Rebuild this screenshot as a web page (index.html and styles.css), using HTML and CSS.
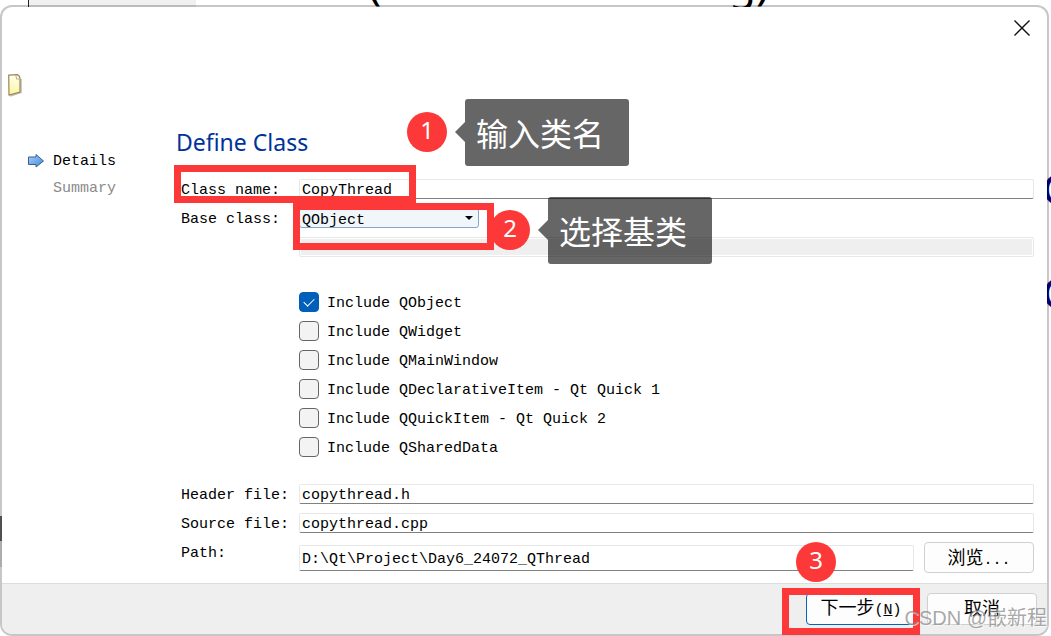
FILE: index.html
```html
<!DOCTYPE html>
<html lang="zh-CN">

<head>
    <meta charset="UTF-8">
    <meta name="viewport" content="width=device-width, initial-scale=1.0">
    <title>C++ Class</title>
    <link rel="stylesheet" href="styles.css">
</head>

<body>
    <!-- editor window behind the dialog -->
    <div class="backdrop" aria-hidden="true">
        <div class="backdrop-tab"></div>
        <span class="backdrop-text paren">(</span>
        <span class="backdrop-text tail">g)</span>
        <span class="backdrop-text code code-first">C</span>
        <span class="backdrop-text code code-second">C</span>
        <div class="backdrop-scroll"></div>
    </div>

    <main class="dialog">
        <div class="titlebar">
            <button class="close" type="button" aria-label="Close">
                <svg width="16" height="16" viewBox="0 0 16 16">
                    <path d="M.5 .5L15.500 15.500M15.500 .5L.5 15.500" fill="none" stroke="#111" stroke-width="1.400" />
                </svg>
            </button>
        </div>

        <div class="banner">
            <svg width="15" height="24" viewBox="0 0 15 24">
                <defs>
                    <linearGradient id="paper" x1="0" y1="0" x2="0" y2="1">
                        <stop offset="0" stop-color="#fffef0" />
                        <stop offset="1" stop-color="#fbf6a0" />
                    </linearGradient>
                </defs>
                <path d="M2 22L13 18.500V5" fill="none" stroke="#bbb" stroke-width="1.500" />
                <path d="M.7 1.200L9 .7Q12 1.500 12 5V18L1 21Z" fill="url(#paper)" stroke="#9c8455" stroke-width="1.200" />
                <path d="M8 1.300L8.500 5H11.500" fill="#fff" stroke="#b5ab8c" />
            </svg>
        </div>

        <div class="content">
            <nav class="steps">
                <div class="step active">
                    <svg width="17" height="16" viewBox="0 0 17 16">
                        <defs>
                            <linearGradient id="arrow" x1="0" y1="0" x2="1" y2="1">
                                <stop offset="0" stop-color="#a9d2fb" />
                                <stop offset="1" stop-color="#4186d8" />
                            </linearGradient>
                        </defs>
                        <path d="M.5 4H8V1.500L15.500 8L8 14V11.500H.5Z" fill="url(#arrow)" stroke="#365f94" />
                    </svg>
                    <span>Details</span>
                </div>
                <div class="step">
                    <span>Summary</span>
                </div>
            </nav>

            <form class="form">
                <h1>Define Class</h1>

                <div class="row">
                    <label for="class-name">Class name:</label>
                    <input class="field" id="class-name" type="text" value="CopyThread">
                    <div class="mark mark-name"></div>
                    <div class="badge badge-name">1</div>
                    <div class="callout callout-name">输入类名</div>
                </div>
                <div class="row">
                    <label for="base-class">Base class:</label>
                    <div class="combo">
                        <select id="base-class">
                            <option>QObject</option>
                        </select>
                    </div>
                    <div class="mark mark-base"></div>
                    <div class="badge badge-base">2</div>
                    <div class="callout callout-base">选择基类</div>
                </div>
                <div class="row">
                    <span></span>
                    <input class="field" type="text" aria-label="Custom base class" disabled>
                </div>

                <div class="checks">
                    <label><input type="checkbox" checked><span>Include QObject</span></label>
                    <label><input type="checkbox"><span>Include QWidget</span></label>
                    <label><input type="checkbox"><span>Include QMainWindow</span></label>
                    <label><input type="checkbox"><span>Include QDeclarativeItem - Qt Quick 1</span></label>
                    <label><input type="checkbox"><span>Include QQuickItem - Qt Quick 2</span></label>
                    <label><input type="checkbox"><span>Include QSharedData</span></label>
                </div>

                <div class="row">
                    <label for="header-file">Header file:</label>
                    <input class="field" id="header-file" type="text" value="copythread.h">
                </div>
                <div class="row">
                    <label for="source-file">Source file:</label>
                    <input class="field" id="source-file" type="text" value="copythread.cpp">
                </div>
                <div class="row">
                    <label for="path">Path:</label>
                    <div class="path">
                        <input class="field" id="path" type="text" value="D:\Qt\Project\Day6_24072_QThread">
                        <button class="btn" type="button">浏览<span class="latin">...</span></button>
                    </div>
                </div>
            </form>
        </div>

        <footer class="footer">
            <div class="next">
                <button class="btn primary" type="button">下一步<span class="latin">(<u>N</u>)</span></button>
                <div class="mark mark-next"></div>
                <div class="badge badge-next">3</div>
            </div>
            <button class="btn" type="button">取消</button>
            <div class="watermark">CSDN @嵌新程</div>
        </footer>
    </main>
</body>

</html>
```
FILE: styles.css
```css
* {
    box-sizing: border-box;
}

body {
    margin: 0;
    padding: 5px 2px 0 0;
    position: relative;
    overflow: hidden;
    background: #fff;
    color: #000;
    font: 15px/20px "Liberation Mono", "Noto Sans CJK SC", monospace;
}

input,
select,
button {
    font: inherit;
    color: inherit;
}

/* backdrop */
.backdrop {
    position: absolute;
    inset: 0;
    overflow: hidden;
}

.backdrop-tab {
    position: absolute;
    left: 28px;
    top: 0;
    width: 168px;
    height: 7px;
    border-left: 1px solid #222;
    background: #f0f0f0;
}

.backdrop-text {
    position: absolute;
    font: 44px/44px "Noto Sans", sans-serif;
}

.paren {
    left: 368px;
    top: -40px;
}

.tail {
    left: 729px;
    top: -40px;
}

.code {
    left: 1042px;
    color: #000080;
}

.code-first {
    top: 166px;
}

.code-second {
    top: 270px;
}

.backdrop-scroll {
    position: absolute;
    left: 0;
    top: 516px;
    width: 2px;
    height: 51px;
    background: linear-gradient(#666 25px, #ddd 25px);
}

/* dialog */
.dialog {
    position: relative;
    display: flex;
    flex-direction: column;
    min-height: calc(100vh - 5px);
    border: 2px solid rgba(0, 0, 0, 0.22);
    border-radius: 12px;
    background: #fff;
    background-clip: padding-box;
}

.titlebar {
    display: flex;
    justify-content: flex-end;
    height: 40px;
    padding: 8px 12px;
}

.close {
    display: flex;
    align-items: center;
    justify-content: center;
    width: 26px;
    height: 26px;
    padding: 0;
    border: 0;
    background: none;
}

.banner {
    height: 82px;
    padding: 27px 6px 0;
}

.content {
    display: flex;
    flex: 1;
}

.steps {
    width: 172px;
    padding: 18px 0 0 26px;
}

.step {
    display: flex;
    align-items: center;
    gap: 8px;
    height: 27px;
    padding-left: 25px;
    color: #8a8a8a;
}

.step.active {
    padding-left: 0;
    color: #000;
}

.step span {
    padding-top: 2px;
}

.form {
    display: flex;
    flex: 1;
    flex-direction: column;
    gap: 9px;
    padding: 0 13px 10px 7px;
}

h1 {
    margin: 0 0 15px -5px;
    color: #003399;
    font: 23px/26px "Noto Sans", sans-serif;
}

.row {
    position: relative;
    display: grid;
    grid-template-columns: 118px 1fr;
}

.row label {
    padding-top: 4px;
    line-height: 16px;
}

.field {
    width: 100%;
    min-width: 0;
    height: 20px;
    padding: 3px 2px 0;
    border: 1px solid #e8e8e8;
    border-bottom-color: #808080;
    border-radius: 2px;
    background: #fff;
}

.field:disabled {
    border-color: #e8e8e8;
    background: #efefef;
    box-shadow: inset 0 0 0 1px #fff;
}

.combo {
    position: relative;
    width: 180px;
}

.combo select {
    appearance: none;
    display: block;
    width: 100%;
    height: 20px;
    padding: 2px 2px 0;
    border: 1px solid #7da9ce;
    border-radius: 3px;
    background: #f1f6fb;
}

.combo::after {
    content: "";
    position: absolute;
    right: 6px;
    top: 8px;
    border: 4px solid transparent;
    border-top-color: #000;
    border-bottom: 0;
}

.checks {
    display: flex;
    flex-direction: column;
    gap: 9px;
    margin: 26px 0 18px 118px;
}

.checks label {
    display: flex;
    gap: 8px;
}

.checks span {
    padding-top: 4px;
    line-height: 16px;
}

.checks input {
    appearance: none;
    display: flex;
    justify-content: center;
    width: 20px;
    height: 20px;
    margin: 0;
    border: 1px solid #666;
    border-radius: 4px;
    background: #f3f3f3;
}

.checks input:checked {
    border-color: #005fb8;
    background: #005fb8;
}

.checks input:checked::after {
    content: "";
    width: 5px;
    height: 9px;
    margin-top: 3px;
    border: solid #fff;
    border-width: 0 1px 1px 0;
    transform: rotate(45deg);
}

.path {
    display: flex;
    align-items: center;
    gap: 10px;
}

.path .field {
    flex: 1;
    height: 26px;
}

.btn {
    width: 110px;
    height: 32px;
    padding: 1px 0 0;
    border: 1px solid #d0d0d0;
    border-radius: 4px;
    background: #fdfdfd;
    font-size: 18px;
}

.path .btn {
    height: 31px;
    padding-top: 4px;
}

.btn.primary {
    border-color: #0067c0;
}

.latin {
    font-size: 15px;
}

.footer {
    position: relative;
    display: flex;
    justify-content: flex-end;
    gap: 11px;
    padding: 9px 10px;
    border-top: 1px solid #dcdcdc;
    border-radius: 0 0 10px 10px;
    background: #efefef;
}

.next {
    position: relative;
}

/* tutorial marks drawn over the dialog */
.mark {
    position: absolute;
    border: 7px solid #fc3838;
}

.mark-name {
    left: -7px;
    top: -14px;
    width: 242px;
    height: 38px;
}

.mark-base {
    left: 112px;
    top: -5px;
    width: 201px;
    height: 47px;
    z-index: 1;
}

.mark-next {
    left: -24px;
    top: -5px;
    width: 138px;
    height: 47px;
}

.badge {
    position: absolute;
    z-index: 2;
    width: 40px;
    height: 40px;
    border-radius: 50%;
    background: #fc3838;
    color: #fff;
    font: 24px/36px "Noto Sans", sans-serif;
    text-align: center;
}

.badge-name {
    left: 226px;
    top: -67px;
}

.badge-base {
    left: 309px;
    top: 2px;
}

.badge-next {
    left: -10px;
    top: -51px;
}

.callout {
    position: absolute;
    z-index: 2;
    width: 164px;
    padding: 9px 11px 10px;
    border-radius: 3px;
    background: rgba(0, 0, 0, 0.6);
    color: #fff;
    font: 32px/48px "Noto Sans CJK SC", sans-serif;
}

.callout::before {
    content: "";
    position: absolute;
    right: 100%;
    top: 23px;
    border: 10px solid transparent;
    border-right-color: rgba(0, 0, 0, 0.6);
    border-left: 0;
}

.callout-name {
    left: 284px;
    top: -80px;
}

.callout-base {
    left: 367px;
    top: -11px;
}

.watermark {
    position: absolute;
    right: 0;
    bottom: 4px;
    color: rgba(130, 130, 130, 0.7);
    font: 20px/24px "Liberation Sans", "Noto Sans CJK SC", sans-serif;
    text-shadow: 1px 1px 0 rgba(255, 255, 255, 0.6);
    white-space: nowrap;
    pointer-events: none;
}
```
